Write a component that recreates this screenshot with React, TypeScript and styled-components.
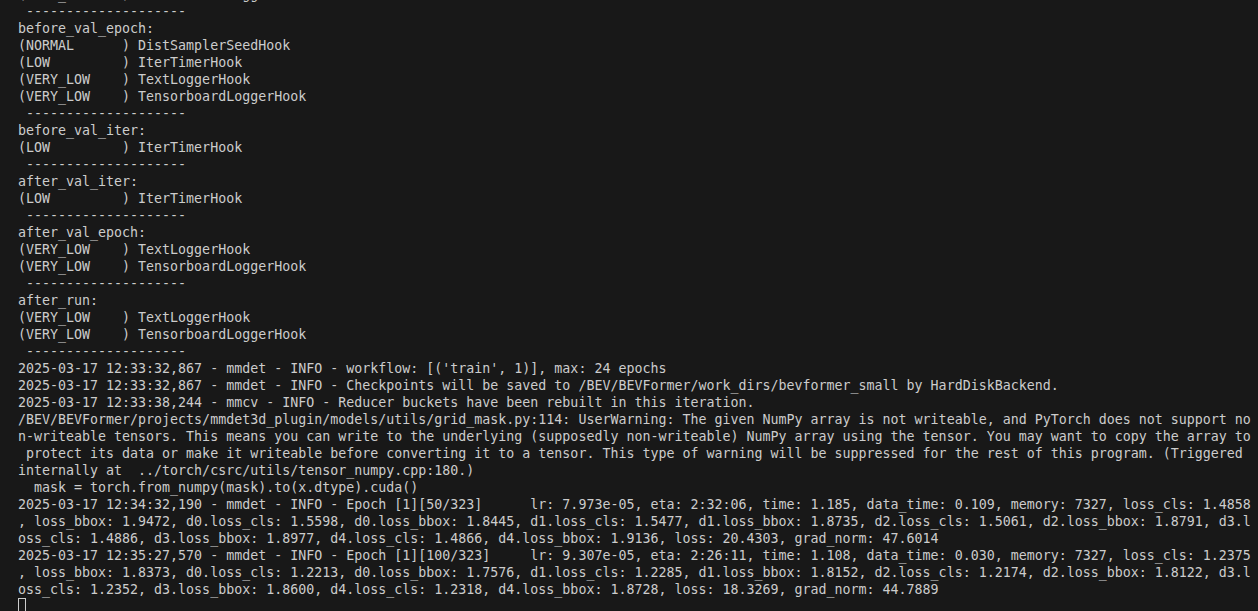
import React from "react";
import styled, { createGlobalStyle } from "styled-components";

const GlobalStyle = createGlobalStyle`
  html, body {
    margin: 0;
    padding: 0;
    background: #181818;
    overflow: hidden;
  }
`;

const Terminal = styled.div`
  width: 1258px;
  height: 611px;
  overflow: hidden;
  background: #181818;
  box-sizing: border-box;
  padding-left: 18px;
`;

const Buffer = styled.div`
  display: flex;
  flex-direction: column;
  margin-top: -14px;
  font-family: "DejaVu Sans Mono", "Liberation Mono", monospace;
  font-size: 13.3px;
  line-height: 17px;
  color: #cccccc;
`;

const Line = styled.div`
  height: 17px;
  white-space: pre;
`;

const Cursor = styled.span`
  display: inline-block;
  box-sizing: border-box;
  width: 8px;
  height: 17px;
  border: 1px solid #cccccc;
  vertical-align: top;
`;

const DASH = " -------------------- ";

const lines: string[] = [
  "(VERY_LOW    ) TensorboardLoggerHook",
  DASH,
  "before_val_epoch:",
  "(NORMAL      ) DistSamplerSeedHook",
  "(LOW         ) IterTimerHook",
  "(VERY_LOW    ) TextLoggerHook",
  "(VERY_LOW    ) TensorboardLoggerHook",
  DASH,
  "before_val_iter:",
  "(LOW         ) IterTimerHook",
  DASH,
  "after_val_iter:",
  "(LOW         ) IterTimerHook",
  DASH,
  "after_val_epoch:",
  "(VERY_LOW    ) TextLoggerHook",
  "(VERY_LOW    ) TensorboardLoggerHook",
  DASH,
  "after_run:",
  "(VERY_LOW    ) TextLoggerHook",
  "(VERY_LOW    ) TensorboardLoggerHook",
  DASH,
  "2025-03-17 12:33:32,867 - mmdet - INFO - workflow: [('train', 1)], max: 24 epochs",
  "2025-03-17 12:33:32,867 - mmdet - INFO - Checkpoints will be saved to /BEV/BEVFormer/work_dirs/bevformer_small by HardDiskBackend.",
  "2025-03-17 12:33:38,244 - mmcv - INFO - Reducer buckets have been rebuilt in this iteration.",
  "/BEV/BEVFormer/projects/mmdet3d_plugin/models/utils/grid_mask.py:114: UserWarning: The given NumPy array is not writeable, and PyTorch does not support no",
  "n-writeable tensors. This means you can write to the underlying (supposedly non-writeable) NumPy array using the tensor. You may want to copy the array to",
  " protect its data or make it writeable before converting it to a tensor. This type of warning will be suppressed for the rest of this program. (Triggered ",
  "internally at  ../torch/csrc/utils/tensor_numpy.cpp:180.)",
  "  mask = torch.from_numpy(mask).to(x.dtype).cuda()",
  "2025-03-17 12:34:32,190 - mmdet - INFO - Epoch [1][50/323]      lr: 7.973e-05, eta: 2:32:06, time: 1.185, data_time: 0.109, memory: 7327, loss_cls: 1.4858",
  ", loss_bbox: 1.9472, d0.loss_cls: 1.5598, d0.loss_bbox: 1.8445, d1.loss_cls: 1.5477, d1.loss_bbox: 1.8735, d2.loss_cls: 1.5061, d2.loss_bbox: 1.8791, d3.l",
  "oss_cls: 1.4886, d3.loss_bbox: 1.8977, d4.loss_cls: 1.4866, d4.loss_bbox: 1.9136, loss: 20.4303, grad_norm: 47.6014",
  "2025-03-17 12:35:27,570 - mmdet - INFO - Epoch [1][100/323]     lr: 9.307e-05, eta: 2:26:11, time: 1.108, data_time: 0.030, memory: 7327, loss_cls: 1.2375",
  ", loss_bbox: 1.8373, d0.loss_cls: 1.2213, d0.loss_bbox: 1.7576, d1.loss_cls: 1.2285, d1.loss_bbox: 1.8152, d2.loss_cls: 1.2174, d2.loss_bbox: 1.8122, d3.l",
  "oss_cls: 1.2352, d3.loss_bbox: 1.8600, d4.loss_cls: 1.2318, d4.loss_bbox: 1.8728, loss: 18.3269, grad_norm: 44.7889",
];

export default function App() {
  return (
    <>
      <GlobalStyle />
      <Terminal>
        <Buffer>
          {lines.map((l, i) => (
            <Line key={i}>{l}</Line>
          ))}
          <Line>
            <Cursor />
          </Line>
        </Buffer>
      </Terminal>
    </>
  );
}
